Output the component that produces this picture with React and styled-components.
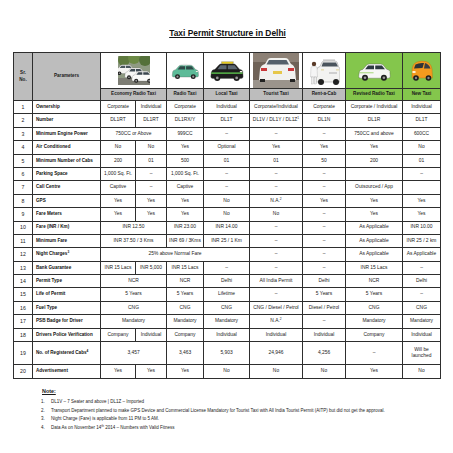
import React from "react";
import styled, { createGlobalStyle } from "styled-components";

const GlobalStyle = createGlobalStyle`
  html, body {
    margin: 0;
    padding: 0;
    background: #ffffff;
  }
  body {
    font-family: "Liberation Sans Narrow", "Liberation Sans", Arial, sans-serif;
    color: #1a1a1a;
  }
`;

const Page = styled.div`
  width: 453px;
  height: 453px;
  padding-top: 26px;
  box-sizing: border-box;
  overflow: hidden;
`;

const Title = styled.h1`
  margin: 0 0 12px;
  height: 14px;
  line-height: 14px;
  text-align: center;
  font-size: 8.4px;
  font-weight: bold;
  text-decoration: underline;
  color: #111;
  padding-left: 2px;
`;

const Table = styled.table`
  margin-left: 13px;
  width: 427px;
  border-collapse: collapse;
  table-layout: fixed;
  border: 1.5px solid #3c3c3c;
`;

const Row = styled.tr`
  height: ${(p) => p.$h || 13.4}px;
`;

const Cell = styled.td`
  border: 1px solid #2e2e2e;
  padding: 0 1px;
  font-size: 4.9px;
  line-height: 6.5px;
  text-align: center;
  vertical-align: middle;
  white-space: nowrap;
  overflow: hidden;
  color: #222;
`;

const SrCell = styled(Cell)`
  font-size: 5.2px;
`;

const ParamCell = styled(Cell)`
  text-align: left;
  padding-left: 3px;
  font-size: 4.6px;
  font-weight: bold;
  color: #111;
`;

const HeadCell = styled(Cell)`
  background: ${(p) => (p.$green ? "#84c64c" : "#bdbdbd")};
  font-size: 4.6px;
  font-weight: bold;
  color: #1a1a1a;
`;

const PicCell = styled(Cell)`
  background: ${(p) => (p.$green ? "#84c64c" : "#ffffff")};
  padding: 0;
  svg {
    display: block;
    margin: 0 auto;
  }
`;

const Sup = styled.sup`
  font-size: 3.2px;
  line-height: 0;
  vertical-align: 2px;
`;

const Notes = styled.div`
  margin-top: 8px;
  padding-left: 41px;
`;

const NoteTitle = styled.div`
  font-size: 5.4px;
  line-height: 8px;
  font-weight: bold;
  text-decoration: underline;
  margin-left: 1px;
`;

const NoteList = styled.ol`
  margin: 3px 0 0;
  padding: 0;
  list-style: none;
`;

const NoteItem = styled.li`
  display: flex;
  font-size: 4.5px;
  line-height: 8.5px;
  color: #222;
`;

const NoteNum = styled.span`
  width: 10px;
  flex: 0 0 10px;
`;

const Wheel = ({ cx, cy, r = 3 }) => (
  <g>
    <circle cx={cx} cy={cy} r={r} fill="#1e1e1e" />
    <circle cx={cx} cy={cy} r={r * 0.45} fill="#9a9a9a" />
  </g>
);

function SedanShape({ body, roof, glass = "#3b4a55", stripe }) {
  return (
    <g>
      <path
        d="M3 19 L3.6 14 Q4.2 11.6 7.5 11.2 L12 6.2 Q13 5.2 15 5.2 L27 5.2 Q29 5.2 30.2 6.4 L34 11 Q37.2 11.6 37.6 13.4 L38 19 Q38 21 36 21 L5 21 Q3 21 3 19Z"
        fill={body}
        stroke="#555"
        strokeWidth="0.4"
      />
      {roof && <path d="M15 5.2 L27 5.2 L27.5 3 L14.5 3Z" fill={roof} stroke="#333" strokeWidth="0.3" />}
      <path d="M13.4 6.8 L10.2 11 L20 11 L20 6.8Z" fill={glass} />
      <path d="M21.4 6.8 L21.4 11 L32.2 11 L28.8 6.8Z" fill={glass} />
      {stripe && <rect x="3.5" y="14.5" width="34" height="1.6" fill={stripe} />}
      <rect x="34.5" y="13" width="2.6" height="1.4" fill="#f2f2e6" />
      <Wheel cx={10} cy={20.5} r={3.3} />
      <Wheel cx={31} cy={20.5} r={3.3} />
    </g>
  );
}

function EconomyPic() {
  return (
    <svg width="32" height="29" viewBox="0 0 32 29">
      <rect width="32" height="29" fill="#8e9a82" />
      <circle cx="6" cy="4" r="6" fill="#5f7a3e" />
      <circle cx="16" cy="2" r="6" fill="#6c8a45" />
      <circle cx="27" cy="4" r="6" fill="#54703a" />
      <rect y="22" width="32" height="7" fill="#7d7d74" />
      <g transform="translate(-4 6) scale(0.55)">
        <SedanShape body="#f4f4f2" glass="#4a565c" />
      </g>
      <g transform="translate(5 9) scale(0.6)">
        <SedanShape body="#f7f7f5" glass="#3e4a52" />
      </g>
      <g transform="translate(12 12) scale(0.62)">
        <SedanShape body="#fafaf8" glass="#39444c" />
      </g>
    </svg>
  );
}

function RadioPic() {
  return (
    <svg width="30" height="22" viewBox="0 0 40 26">
      <SedanShape body="#5dbb98" glass="#2f4a48" />
      <rect x="17" y="3.4" width="6" height="2" fill="#e8e8e8" />
    </svg>
  );
}

function LocalPic() {
  return (
    <svg width="37" height="24" viewBox="0 0 40 26">
      <SedanShape body="#1d1d1d" roof="#f2d31b" glass="#5b6670" stripe="#58b84a" />
    </svg>
  );
}

function TouristPic() {
  return (
    <svg width="46" height="35" viewBox="0 0 46 35">
      <rect width="46" height="35" fill="#6f6257" />
      <rect y="0" width="46" height="9" fill="#8c8075" />
      <rect y="27" width="46" height="8" fill="#9b948c" />
      <path d="M6 27 L7 16 Q8 12 12 11 L15 6 Q16 5 18 5 L32 5 Q34 5 35 6 L38 11 Q41 12 42 16 L43 27Z" fill="#f1f1ef" />
      <path d="M16 7 L13.5 11.5 L36 11.5 L33.5 7Z" fill="#55606a" />
      <rect x="8" y="15" width="6" height="3" fill="#c8383a" />
      <rect x="35" y="15" width="6" height="3" fill="#c8383a" />
      <rect x="20" y="18" width="9" height="3" fill="#e6c74a" />
      <rect x="7" y="26" width="5" height="3" fill="#222" />
      <rect x="37" y="26" width="5" height="3" fill="#222" />
    </svg>
  );
}

function RentPic() {
  return (
    <svg width="31" height="32" viewBox="0 0 31 32">
      <path d="M7 27 L7.5 15 Q8 12 11 11.5 L13 7 Q14 6 16 6 L25 6 Q27 6 28 7 L29.5 11.5 Q31 13 31 15 L31 27Z" fill="#f3f3f1" stroke="#777" strokeWidth="0.4" />
      <path d="M14 7.5 L12.5 11.5 L29 11.5 L27 7.5Z" fill="#4a545c" />
      <rect x="14" y="4.5" width="12" height="1.2" fill="#bbb" />
      <rect x="20" y="17" width="8" height="2" fill="#cfcfcf" />
      <rect x="12" y="14" width="3" height="1.6" fill="#e8e0b8" />
      <rect x="27" y="14" width="3" height="1.6" fill="#e8e0b8" />
      <circle cx="12" cy="27" r="3" fill="#222" />
      <circle cx="27" cy="27" r="3" fill="#222" />
      <circle cx="5" cy="9" r="2.2" fill="#5a3b28" />
      <path d="M2 12 Q5 10.5 8 12 L8.5 22 L1.5 22Z" fill="#f5f5f5" stroke="#999" strokeWidth="0.3" />
      <rect x="2.5" y="22" width="2" height="7" fill="#eee" stroke="#999" strokeWidth="0.3" />
      <rect x="5.5" y="22" width="2" height="7" fill="#eee" stroke="#999" strokeWidth="0.3" />
    </svg>
  );
}

function RevisedPic() {
  return (
    <svg width="36" height="24" viewBox="0 0 40 26">
      <SedanShape body="#f6f6f4" glass="#2d3942" />
      <rect x="3.5" y="14.5" width="16" height="1" fill="#9bd36a" />
    </svg>
  );
}

function NanoPic() {
  return (
    <svg width="26" height="26" viewBox="0 0 26 26">
      <path d="M3 20 L3 13 Q3 6 8 4 Q12 2.5 17 3.5 Q22 5 23 11 L23.5 20Z" fill="#f39a1e" stroke="#b56b10" strokeWidth="0.4" />
      <path d="M6.5 6.5 Q10 4.5 15 5 L13.5 10 L5 10.5Z" fill="#2f3438" />
      <path d="M16 5 Q20 6 21.5 10.5 L15 10.5Z" fill="#3a3f44" />
      <rect x="3.5" y="13" width="3" height="2" fill="#fff3d0" />
      <circle cx="7" cy="20" r="2.8" fill="#1d1d1d" />
      <circle cx="19.5" cy="20" r="2.8" fill="#1d1d1d" />
      <circle cx="7" cy="20" r="1.2" fill="#888" />
      <circle cx="19.5" cy="20" r="1.2" fill="#888" />
    </svg>
  );
}

const widths = [19, 68, 35, 31, 37, 46, 53, 43, 57, 38];

const dash = "–";

// each row: [no, label, cells]; a cell is a string or [text, colSpan]
const rows = [
  [1, "Ownership", ["Corporate", "Individual", "Corporate", "Individual", "Corporate/Individual", "Corporate", "Corporate / Individual", "Individual"]],
  [2, "Number", ["DL1RT", "DL1RT", "DL1RX/Y", "DL1T", <>DL1V / DL1Y / DL1Z<Sup>1</Sup></>, "DL1N", "DL1R", "DL1T"]],
  [3, "Minimum Engine Power", [["750CC or Above", 2], "999CC", dash, dash, dash, "750CC and above", "600CC"]],
  [4, "Air Conditioned", ["No", "No", "Yes", "Optional", "Yes", "Yes", "Yes", "No"]],
  [5, "Minimum Number of Cabs", ["200", "01", "500", "01", "01", "50", "200", "01"]],
  [6, "Parking Space", ["1,000 Sq. Ft.", dash, "1,000 Sq. Ft.", dash, dash, dash, "", dash]],
  [7, "Call Centre", ["Captive", dash, "Captive", dash, dash, dash, "Outsourced / App", ""]],
  [8, "GPS", ["Yes", "Yes", "Yes", "No", <>N.A.<Sup>2</Sup></>, "Yes", "Yes", "Yes"]],
  [9, "Fare Meters", ["Yes", "Yes", "Yes", "No", "No", dash, "Yes", "Yes"]],
  [10, "Fare (INR / Km)", [["INR 12.50", 2], "INR 23.00", "INR 14.00", dash, dash, "As Applicable", "INR 10.00"]],
  [11, "Minimum Fare", [["INR 37.50 / 3 Kms", 2], "INR 69 / 3Kms", "INR 25 / 1 Km", dash, dash, "As Applicable", "INR 25 / 2 km"]],
  [12, <>Night Charges<Sup>3</Sup></>, [["25% above Normal Fare", 4], dash, dash, "As Applicable", "As Applicable"]],
  [13, "Bank Guarantee", ["INR 15 Lacs", "INR 5,000", "INR 15 Lacs", dash, dash, dash, "INR 15 Lacs", dash]],
  [14, "Permit Type", [["NCR", 2], "NCR", "Delhi", "All India Permit", "Delhi", "NCR", "Delhi"]],
  [15, "Life of Permit", [["5 Years", 2], "5 Years", "Lifetime", dash, "5 Years", "5 Years", dash]],
  [16, "Fuel Type", [["CNG", 2], "CNG", "CNG", "CNG / Diesel / Petrol", "Diesel / Petrol", "CNG", "CNG"]],
  [17, "PSB Badge for Driver", [["Mandatory", 2], "Mandatory", "Mandatory", <>N.A.<Sup>2</Sup></>, dash, "Mandatory", "Mandatory"]],
  [18, "Drivers Police Verification", ["Company", "Individual", "Company", "Individual", "Individual", "Individual", "Company", "Individual"]],
  [19, <>No. of Registered Cabs<Sup>4</Sup></>, [["3,457", 2], "3,463", "5,903", "24,946", "4,256", dash, <>Will be<br />launched</>], 23],
  [20, "Advertisement", ["Yes", "Yes", "Yes", "No", "No", "No", "Yes", "No"], 14],
];

const notes = [
  "DL1V – 7 Seater and above | DL1Z – Imported",
  "Transport Department planned to make GPS Device and Commercial License Mandatory for Tourist Taxi with All India Tourist Permit (AITP) but did not get the approval.",
  "Night Charge (Fare) is applicable from 11 PM to 5 AM.",
  <>Data As on November 14<Sup>th</Sup> 2014 – Numbers with Valid Fitness</>,
];

export default function App() {
  return (
    <Page>
      <GlobalStyle />
      <Title>Taxi Permit Structure in Delhi</Title>
      <Table>
        <colgroup>
          {widths.map((w, i) => (
            <col key={i} style={{ width: w }} />
          ))}
        </colgroup>
        <tbody>
          <Row $h={35}>
            <HeadCell rowSpan={2}>
              Sr.
              <br />
              No.
            </HeadCell>
            <HeadCell rowSpan={2}>Parameters</HeadCell>
            <PicCell colSpan={2}>
              <EconomyPic />
            </PicCell>
            <PicCell>
              <RadioPic />
            </PicCell>
            <PicCell>
              <LocalPic />
            </PicCell>
            <PicCell>
              <TouristPic />
            </PicCell>
            <PicCell>
              <RentPic />
            </PicCell>
            <PicCell $green>
              <RevisedPic />
            </PicCell>
            <PicCell $green>
              <NanoPic />
            </PicCell>
          </Row>
          <Row $h={12}>
            <HeadCell colSpan={2}>Economy Radio Taxi</HeadCell>
            <HeadCell>Radio Taxi</HeadCell>
            <HeadCell>Local Taxi</HeadCell>
            <HeadCell>Tourist Taxi</HeadCell>
            <HeadCell>Rent-a-Cab</HeadCell>
            <HeadCell $green>Revised Radio Taxi</HeadCell>
            <HeadCell $green>New Taxi</HeadCell>
          </Row>
          {rows.map(([no, label, cells, h]) => (
            <Row key={no} $h={h}>
              <SrCell>{no}</SrCell>
              <ParamCell>{label}</ParamCell>
              {cells.map((c, i) =>
                Array.isArray(c) ? (
                  <Cell key={i} colSpan={c[1]}>
                    {c[0]}
                  </Cell>
                ) : (
                  <Cell key={i}>{c}</Cell>
                )
              )}
            </Row>
          ))}
        </tbody>
      </Table>
      <Notes>
        <NoteTitle>Note:</NoteTitle>
        <NoteList>
          {notes.map((n, i) => (
            <NoteItem key={i}>
              <NoteNum>{i + 1}.</NoteNum>
              <span>{n}</span>
            </NoteItem>
          ))}
        </NoteList>
      </Notes>
    </Page>
  );
}
